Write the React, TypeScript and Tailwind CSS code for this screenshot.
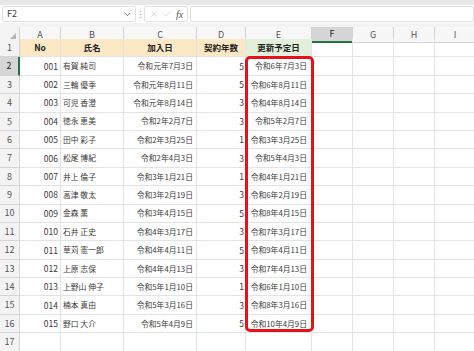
import { ChevronDown, X, Check } from 'lucide-react';

const cols = ['A', 'B', 'C', 'D', 'E', 'F', 'G', 'H', 'I'];

const rows = [
  ['001', '有賀 純司', '令和元年7月3日', '5', '令和6年7月3日'],
  ['002', '三輪 優季', '令和元年8月11日', '5', '令和6年8月11日'],
  ['003', '可児 香澄', '令和元年8月14日', '3', '令和4年8月14日'],
  ['004', '徳永 恵美', '令和2年2月7日', '3', '令和5年2月7日'],
  ['005', '田中 彩子', '令和2年3月25日', '1', '令和3年3月25日'],
  ['006', '松尾 博紀', '令和2年4月3日', '3', '令和5年4月3日'],
  ['007', '井上 倫子', '令和3年1月21日', '1', '令和4年1月21日'],
  ['008', '高津 敬太', '令和3年2月19日', '3', '令和6年2月19日'],
  ['009', '金森 薫', '令和3年4月15日', '5', '令和8年4月15日'],
  ['010', '石井 正史', '令和4年3月17日', '3', '令和7年3月17日'],
  ['011', '草苅 憲一郎', '令和4年4月11日', '5', '令和9年4月11日'],
  ['012', '上原 志保', '令和4年4月13日', '3', '令和7年4月13日'],
  ['013', '上野山 伸子', '令和5年1月10日', '1', '令和6年1月10日'],
  ['014', '楠本 真由', '令和5年3月16日', '3', '令和8年3月16日'],
  ['015', '野口 大介', '令和5年4月9日', '5', '令和10年4月9日'],
];

const grid = 'grid grid-cols-[20px_41px_63px_73px_49px_66px_41px_41px_41px_41px]';
const cell = 'border-r border-b border-[#e3e3e3] flex items-center overflow-hidden whitespace-nowrap';
const rowHdr = 'border-r border-b border-[#d4d4d4] bg-[#f3f3f3] flex items-center justify-center text-[9px] text-[#555]';

export default function App() {
  return (
    <div
      className="relative w-[474px] h-[351px] overflow-hidden bg-white text-[#3a3a3a]"
      style={{ fontFamily: '"Noto Sans CJK JP", "Noto Sans", sans-serif' }}
    >
      {/* ribbon edge */}
      <div className="h-[5px] bg-[#e8e8e8]" />

      {/* formula bar */}
      <div className="h-[18px] flex items-center bg-white">
        <div className="w-[134px] h-[16px] ml-[2px] flex items-center justify-between border border-[#e0e0e0] rounded-[2px] pl-[4px] pr-[3px]">
          <span className="text-[9px] text-[#444]">F2</span>
          <ChevronDown className="w-[9px] h-[9px] text-[#555]" strokeWidth={2} />
        </div>
        <span className="w-[8px] text-center text-[9px] text-[#888] leading-none">⋮</span>
        <div className="w-[44px] h-[16px] flex items-center justify-around border border-[#e0e0e0] rounded-[2px] px-[2px]">
          <X className="w-[10px] h-[10px] text-[#c4c4c4]" strokeWidth={1.5} />
          <Check className="w-[10px] h-[10px] text-[#c4c4c4]" strokeWidth={1.5} />
          <span className="text-[10px] italic text-[#555]" style={{ fontFamily: '"Liberation Serif", serif' }}>
            fx
          </span>
        </div>
        <div className="flex-1 h-[16px] ml-[2px] border border-[#e0e0e0] rounded-[2px]" />
      </div>
      <div className="h-[4px] bg-[#f3f3f3]" />

      {/* column headers */}
      <div className={`${grid} h-[12px]`}>
        <div className="border-r border-b border-[#d4d4d4] bg-[#f3f3f3] flex items-end justify-end pr-[3px] pb-[2px]">
          <svg width="7" height="7" viewBox="0 0 7 7">
            <polygon points="7,0 7,7 0,7" fill="#b4b4b4" />
          </svg>
        </div>
        {cols.map((c) => (
          <div
            key={c}
            className={`border-r flex items-center justify-center text-[9px] ${
              c === 'F'
                ? 'bg-[#d6d6d6] border-b-2 border-b-[#217346] border-r-[#d4d4d4] text-[#222]'
                : 'bg-[#f7f7f7] border-b border-[#d4d4d4] text-[#555]'
            }`}
          >
            {c}
          </div>
        ))}
      </div>

      {/* row 1 : headings */}
      <div className={`${grid} h-[18.4px]`}>
        <div className={rowHdr}>1</div>
        {['No', '氏名', '加入日', '契約年数'].map((t) => (
          <div key={t} className={`${cell} justify-center bg-[#fde8c6] text-[8.5px] font-bold text-[#222]`}>
            {t}
          </div>
        ))}
        <div className={`${cell} justify-center bg-[#e2efda] text-[8.5px] font-bold text-[#222]`}>更新予定日</div>
        {[0, 1, 2, 3].map((i) => (
          <div key={i} className={cell} />
        ))}
      </div>

      {/* data rows */}
      {rows.map((r, i) => (
        <div key={r[0]} className={`${grid} h-[18.4px] text-[7.8px]`}>
          <div
            className={
              i === 0
                ? 'border-b border-[#d4d4d4] border-r-2 border-r-[#217346] bg-[#d6d6d6] flex items-center justify-center text-[9px] text-[#222]'
                : rowHdr
            }
          >
            {i + 2}
          </div>
          <div className={`${cell} justify-end pr-[2px] text-[8.5px]`}>{r[0]}</div>
          <div className={`${cell} pl-[2px]`}>{r[1]}</div>
          <div className={`${cell} justify-end pr-[3px]`}>{r[2]}</div>
          <div className={`${cell} justify-end pr-[1px] text-[8.5px]`}>{r[3]}</div>
          <div className={`${cell} justify-end pr-[4px]`}>{r[4]}</div>
          <div className={`${cell} relative`}>
            {i === 0 && (
              <div className="absolute inset-[-1px] border-[1.5px] border-[#217346]">
                <div className="absolute right-[-3px] bottom-[-3px] w-[4px] h-[4px] bg-[#217346] border border-white" />
              </div>
            )}
          </div>
          <div className={cell} />
          <div className={cell} />
          <div className={cell} />
        </div>
      ))}

      {/* row 17 */}
      <div className={`${grid} h-[18.4px]`}>
        <div className={rowHdr}>17</div>
        {cols.map((c) => (
          <div key={c} className={cell} />
        ))}
      </div>

      {/* red highlight around column E */}
      <div className="absolute left-[245px] top-[56px] w-[69px] h-[276px] border-[3px] border-[#e5121b] rounded-[5px] pointer-events-none" />
    </div>
  );
}
